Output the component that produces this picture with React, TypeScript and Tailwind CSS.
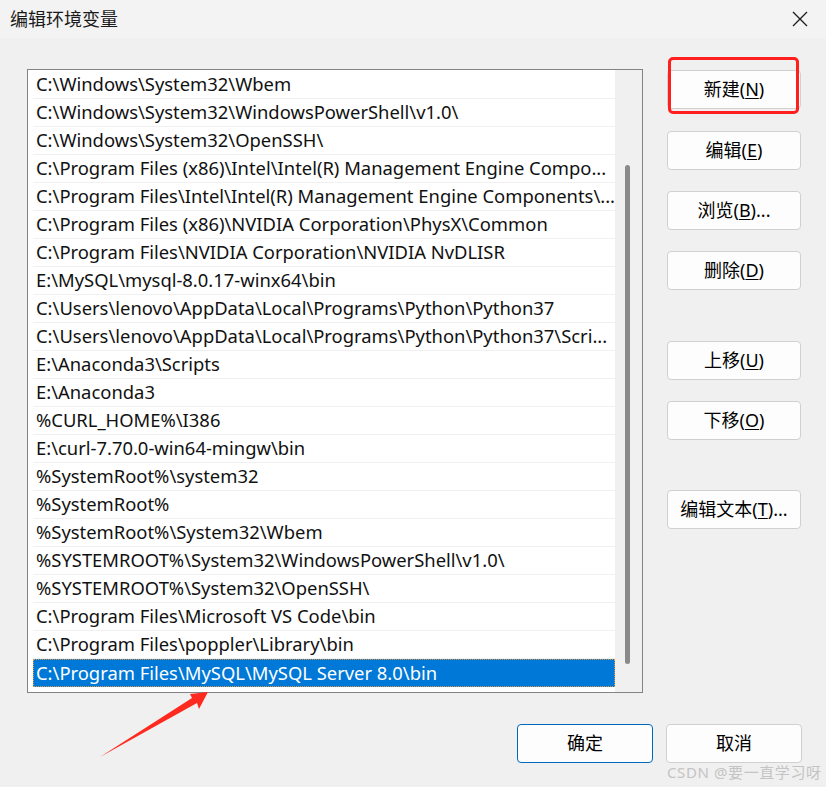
import React from "react";

const paths = [
  "C:\\Windows\\System32\\Wbem",
  "C:\\Windows\\System32\\WindowsPowerShell\\v1.0\\",
  "C:\\Windows\\System32\\OpenSSH\\",
  "C:\\Program Files (x86)\\Intel\\Intel(R) Management Engine Compo...",
  "C:\\Program Files\\Intel\\Intel(R) Management Engine Components\\...",
  "C:\\Program Files (x86)\\NVIDIA Corporation\\PhysX\\Common",
  "C:\\Program Files\\NVIDIA Corporation\\NVIDIA NvDLISR",
  "E:\\MySQL\\mysql-8.0.17-winx64\\bin",
  "C:\\Users\\lenovo\\AppData\\Local\\Programs\\Python\\Python37",
  "C:\\Users\\lenovo\\AppData\\Local\\Programs\\Python\\Python37\\Scri...",
  "E:\\Anaconda3\\Scripts",
  "E:\\Anaconda3",
  "%CURL_HOME%\\I386",
  "E:\\curl-7.70.0-win64-mingw\\bin",
  "%SystemRoot%\\system32",
  "%SystemRoot%",
  "%SystemRoot%\\System32\\Wbem",
  "%SYSTEMROOT%\\System32\\WindowsPowerShell\\v1.0\\",
  "%SYSTEMROOT%\\System32\\OpenSSH\\",
  "C:\\Program Files\\Microsoft VS Code\\bin",
  "C:\\Program Files\\poppler\\Library\\bin",
  "C:\\Program Files\\MySQL\\MySQL Server 8.0\\bin",
];

const font = "font-['Noto_Sans','Noto_Sans_CJK_SC',sans-serif]";

function Btn({ label, hot, rest, className = "" }: { label: string; hot: string; rest?: string; className?: string }) {
  return (
    <button
      className={`flex h-[39px] w-[134px] items-center justify-center rounded-[4px] border border-[#d0d0d0] bg-[#fdfdfd] text-[18px] text-black ${className}`}
    >
      {label}(<span className="underline underline-offset-2">{hot}</span>){rest}
    </button>
  );
}

export default function App() {
  return (
    <div className={`relative h-[787px] w-[826px] overflow-hidden bg-[#f0f0f0] ${font}`}>
      {/* title bar */}
      <div className="flex h-[38px] items-center justify-between bg-[#f3f3f3] pl-[10px] pr-[18px]">
        <span className="text-[18px] text-[#1a1a1a]">编辑环境变量</span>
        <svg width="16" height="16" viewBox="0 0 16 16" className="text-[#1a1a1a]">
          <path d="M1 1L15 15M15 1L1 15" stroke="currentColor" strokeWidth="1.3" fill="none" />
        </svg>
      </div>

      <div className="flex">
        {/* list box */}
        <div className="ml-[27px] mt-[31px] flex h-[624px] w-[616px] border border-[#838383] bg-white">
          <div className="flex w-[587px] flex-col pt-[1px]">
            {paths.map((p, i) => {
              const sel = i === paths.length - 1;
              return (
                <div
                  key={i}
                  className={`ml-[5px] flex h-[28px] items-center overflow-hidden whitespace-nowrap pl-[3px] text-[18.4px] leading-none ${
                    sel
                      ? "bg-[#0078d7] text-white outline outline-1 outline-dotted outline-[#d89a4a] -outline-offset-1"
                      : "border-b border-[#f0f0f0] text-[#111]"
                  }`}
                >
                  {p}
                </div>
              );
            })}
          </div>
          <div className="relative flex-1 bg-[#f0f0f0]">
            <div className="absolute left-[10px] top-[95px] h-[499px] w-[5px] rounded-full bg-[#8a8a8a]" />
          </div>
        </div>

        {/* side buttons */}
        <div className="ml-[24px] flex flex-col">
          <Btn label="新建" hot="N" className="mt-[32px]" />
          <Btn label="编辑" hot="E" className="mt-[22px]" />
          <Btn label="浏览" hot="B" rest="..." className="mt-[21px]" />
          <Btn label="删除" hot="D" className="mt-[21px]" />
          <Btn label="上移" hot="U" className="mt-[51px]" />
          <Btn label="下移" hot="O" className="mt-[21px]" />
          <Btn label="编辑文本" hot="T" rest="..." className="mt-[50px]" />
        </div>
      </div>

      {/* bottom buttons */}
      <div className="mt-[31px] flex justify-end gap-[13px] pr-[24px]">
        <button className="flex h-[39px] w-[136px] items-center justify-center rounded-[4px] border border-[#0067c0] bg-[#fdfdfd] text-[18px] text-black">
          确定
        </button>
        <button className="flex h-[39px] w-[136px] items-center justify-center rounded-[4px] border border-[#d0d0d0] bg-[#fdfdfd] text-[18px] text-black">
          取消
        </button>
      </div>

      {/* annotations */}
      <div className="absolute left-[668px] top-[57px] h-[57px] w-[131px] rounded-[5px] border-[3.5px] border-[#ff1f1f]" />
      <svg className="absolute left-0 top-0" width="826" height="787" viewBox="0 0 826 787">
        <polygon points="100,757 192,698 190,694 208,692 199,709 197,703" fill="#ff2a1f" />
      </svg>
      <div className="absolute left-[667px] top-[761px] text-[15px] tracking-[0.6px] text-[#c4c4c4]">CSDN @要一直学习呀</div>
    </div>
  );
}
